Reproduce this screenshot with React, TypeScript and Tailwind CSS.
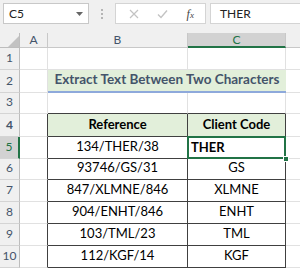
const rows = [
  ['134/THER/38', 'THER'],
  ['93746/GS/31', 'GS'],
  ['847/XLMNE/846', 'XLMNE'],
  ['904/ENHT/846', 'ENHT'],
  ['103/TML/23', 'TML'],
  ['112/KGF/14', 'KGF'],
]

const heights = [22, 23, 21, 23, 22, 21, 22, 22, 22, 22]

function RowHead({ n, active }: { n: number; active?: boolean }) {
  return (
    <div
      className={`w-[20px] shrink-0 flex items-end justify-center pb-[2px] text-[12px] border-b border-[#d4d4d4] ${
        active ? 'bg-[#d2d2d2] text-[#217346] border-r-2 border-r-[#217346]' : 'bg-[#f0f0f0] text-[#44546a] border-r border-r-[#bdbdbd]'
      }`}
    >
      {n}
    </div>
  )
}

export default function App() {
  return (
    <div className="w-[300px] h-[271px] overflow-hidden bg-white" style={{ fontFamily: 'Lato, "Open Sans", sans-serif' }}>
      {/* formula bar */}
      <div className="h-[33px] bg-[#f0f0f0] flex items-start pt-[3px] pl-[3px] gap-0">
        <div className="w-[86px] h-[21px] bg-white border border-[#c8c8c8] flex items-center justify-between px-[5px] text-[12px] text-[#222]">
          <span>C5</span>
          <svg width="7" height="4" viewBox="0 0 7 4"><path d="M0 0h7L3.5 4z" fill="#666" /></svg>
        </div>
        <div className="w-[26px] h-[21px] flex flex-col items-center justify-center gap-[2px]">
          <span className="w-[2px] h-[2px] bg-[#b5b5b5]" />
          <span className="w-[2px] h-[2px] bg-[#b5b5b5]" />
          <span className="w-[2px] h-[2px] bg-[#b5b5b5]" />
        </div>
        <div className="w-[91px] h-[21px] bg-white border border-[#d4d4d4] flex items-center justify-around pl-[4px] pr-[2px]">
          <svg width="10" height="10" viewBox="0 0 10 10"><path d="M1 1l8 8M9 1l-8 8" stroke="#c3c3c3" strokeWidth="1.2" /></svg>
          <svg width="11" height="10" viewBox="0 0 11 10"><path d="M1 5.5l3 3L10 1.5" stroke="#c3c3c3" strokeWidth="1.4" fill="none" /></svg>
          <span className="text-[12px] italic text-[#444]" style={{ fontFamily: '"Liberation Serif", serif' }}>f<span className="text-[9px]">x</span></span>
        </div>
        <div className="ml-[4px] flex-1 h-[21px] bg-white border border-[#d4d4d4] border-r-0 flex items-center pl-[9px] text-[12px] text-[#222]">
          THER
        </div>
      </div>

      {/* column headers */}
      <div className="flex h-[15px] text-[12px] text-[#44546a]">
        <div className="w-[20px] shrink-0 bg-[#f0f0f0] border-r border-b border-[#bdbdbd] flex items-end justify-end">
          <svg width="11" height="11" viewBox="0 0 11 11"><path d="M11 0v11H0z" fill="#c2c2c2" /></svg>
        </div>
        <div className="w-[28px] shrink-0 bg-[#f0f0f0] border-r border-b border-[#c8c8c8] flex items-center justify-center">A</div>
        <div className="w-[140px] shrink-0 bg-[#f0f0f0] border-r border-b border-[#c8c8c8] flex items-center justify-center">B</div>
        <div className="w-[98px] shrink-0 bg-[#d2d2d2] border-r border-r-[#c8c8c8] border-b-2 border-b-[#217346] text-[#217346] flex items-center justify-center">C</div>
        <div className="flex-1 bg-[#f0f0f0] border-b border-[#c8c8c8]" />
      </div>

      {/* row 1 */}
      <div className="flex" style={{ height: heights[0] }}>
        <RowHead n={1} />
        <div className="w-[28px] shrink-0 border-r border-b border-[#e1e1e1]" />
        <div className="w-[140px] shrink-0 border-r border-b border-[#e1e1e1]" />
        <div className="w-[98px] shrink-0 border-r border-b border-[#e1e1e1]" />
        <div className="flex-1 border-b border-[#e1e1e1]" />
      </div>

      {/* row 2 title */}
      <div className="flex" style={{ height: heights[1] }}>
        <RowHead n={2} />
        <div className="w-[28px] shrink-0 border-r border-b border-[#e1e1e1]" />
        <div className="w-[238px] shrink-0 bg-[#e2efda] border-b-2 border-[#8ea9db] flex items-end justify-center pb-[2px] text-[13.5px] font-bold text-[#44546a] whitespace-nowrap">
          Extract Text Between Two Characters
        </div>
        <div className="flex-1 border-b border-[#e1e1e1]" />
      </div>

      {/* row 3 */}
      <div className="flex" style={{ height: heights[2] }}>
        <RowHead n={3} />
        <div className="w-[28px] shrink-0 border-r border-b border-[#e1e1e1]" />
        <div className="w-[140px] shrink-0 border-r border-r-[#e1e1e1] border-b border-b-[#404040]" />
        <div className="w-[98px] shrink-0 border-r border-r-[#e1e1e1] border-b border-b-[#404040]" />
        <div className="flex-1 border-b border-[#e1e1e1]" />
      </div>

      {/* row 4 header */}
      <div className="flex text-[13px] font-bold text-black" style={{ height: heights[3] }}>
        <RowHead n={4} />
        <div className="w-[28px] shrink-0 border-r border-r-[#404040] border-b border-b-[#e1e1e1]" />
        <div className="w-[140px] shrink-0 bg-[#e2efda] border-r border-b border-[#404040] flex items-end justify-center pb-[2px]">Reference</div>
        <div className="w-[98px] shrink-0 bg-[#e2efda] border-r border-b border-[#404040] flex items-end justify-center pb-[2px]">Client Code</div>
        <div className="flex-1 border-b border-[#e1e1e1]" />
      </div>

      {rows.map(([ref, code], i) => (
        <div key={ref} className="flex text-[13px] text-black" style={{ height: heights[4 + i] }}>
          <RowHead n={5 + i} active={i === 0} />
          <div className="w-[28px] shrink-0 border-r border-r-[#404040] border-b border-b-[#e1e1e1]" />
          <div className="w-[140px] shrink-0 border-r border-b border-[#404040] flex items-end justify-center pb-[2px]">{ref}</div>
          {i === 0 ? (
            <div className="relative w-[98px] shrink-0 border-r border-b border-[#404040] flex items-end pl-[3px] pb-[1px] font-bold">
              {code}
              <span className="absolute -top-px -left-px -right-px -bottom-px border-2 border-[#217346]" />
              <span className="absolute -right-[4px] -bottom-[4px] w-[6px] h-[6px] bg-[#217346] border border-white" />
            </div>
          ) : (
            <div className="w-[98px] shrink-0 border-r border-b border-[#404040] flex items-end justify-center pb-[2px]">{code}</div>
          )}
          <div className="flex-1 border-b border-[#e1e1e1]" />
        </div>
      ))}
    </div>
  )
}
